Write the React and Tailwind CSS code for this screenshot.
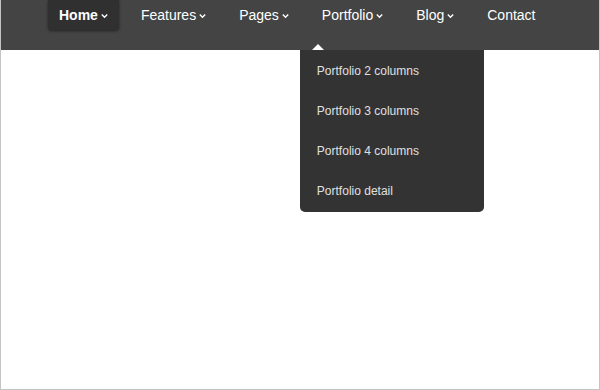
const NAV = [
  { label: 'Home', caret: true, active: true },
  { label: 'Features', caret: true },
  { label: 'Pages', caret: true },
  { label: 'Portfolio', caret: true, open: true },
  { label: 'Blog', caret: true },
  { label: 'Contact' },
]

const PORTFOLIO = ['Portfolio 2 columns', 'Portfolio 3 columns', 'Portfolio 4 columns', 'Portfolio detail']

function Caret() {
  return (
    <svg width="7" height="6" viewBox="0 0 7 6" className="ml-[3px] mt-[1px]">
      <path d="M0.8 1.5 L3.5 4.2 L6.2 1.5" fill="none" stroke="currentColor" strokeWidth="1.4" />
    </svg>
  )
}

function NavItem({ item }) {
  return (
    <div className="relative">
      <a
        href="#"
        className={
          item.active
            ? 'flex items-center h-[30px] px-[11px] rounded-b-[4px] bg-[#303030] shadow-[0_1px_3px_rgba(0,0,0,0.5)] font-bold text-white'
            : 'flex items-center h-[30px] px-[11px] text-white'
        }
      >
        {item.label}
        {item.caret && <Caret />}
      </a>
      {item.open && (
        <div className="absolute left-[-11px] top-[44px] z-10">
          <div className="ml-[12px] w-0 h-0 border-l-[6px] border-r-[6px] border-b-[6px] border-l-transparent border-r-transparent border-b-white" />
          <ul className="w-[184px] bg-[#333333] rounded-b-[5px] py-[1px] text-[12px] text-[#e0e0e0]">
            {PORTFOLIO.map((p) => (
              <li key={p} className="h-[40px] flex items-center pl-[17px]">
                {p}
              </li>
            ))}
          </ul>
        </div>
      )}
    </div>
  )
}

export default function App() {
  return (
    <div className="w-[600px] h-[390px] border border-t-0 border-[#c4c4c4] bg-white font-['Liberation_Sans',Arial,sans-serif] text-[14px]">
      <nav className="h-[50px] bg-[#444444] flex items-start pl-[47px] gap-[11px]">
        {NAV.map((item) => (
          <NavItem key={item.label} item={item} />
        ))}
      </nav>
    </div>
  )
}
